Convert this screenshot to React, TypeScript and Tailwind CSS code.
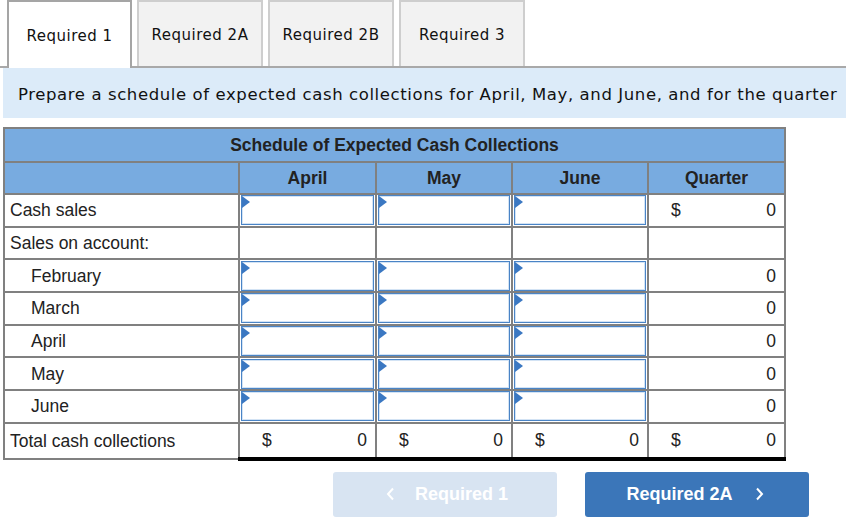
import React from "react";

const Tri = () => (
  <span className="absolute left-0 top-0 w-0 h-0 border-t-[6px] border-b-[6px] border-l-[8px] border-t-transparent border-b-transparent border-l-[#3b78c2]" />
);

const InputCell = () => (
  <td className="border-2 border-[#808080] p-0 h-[32.7px] bg-white">
    <div className="relative h-[30px] mx-[1px] border border-[#4a84c6] shadow-[inset_0_0_0_1px_#d3e3f4] bg-white">
      <Tri />
    </div>
  </td>
);

const Dollar = ({ dollar }: { dollar?: boolean }) => (
  <td className="border-2 border-[#808080] px-[8px] h-[32.7px] bg-white">
    <div className="flex justify-between items-center pl-[14px]">
      <span>{dollar ? "$" : ""}</span>
      <span>0</span>
    </div>
  </td>
);

export default function App() {
  const tabs = ["Required 1", "Required 2A", "Required 2B", "Required 3"];
  const font = { fontFamily: "'DejaVu Sans', Verdana, sans-serif" };
  const rows = ["February", "March", "April", "May", "June"];
  return (
    <div className="w-[846px] h-[530px] bg-white overflow-hidden text-[#222]">
      <div className="flex items-end pt-[2px] pl-[7px] gap-[5px] border-b-2 border-[#a9a9a9] h-[68px]" style={font}>
        {tabs.map((t, i) => (
          <div
            key={t}
            className={
              "flex items-center justify-center pt-[3px] text-[15px] tracking-[0.5px] text-[#111] " +
              (i === 0
                ? "w-[125px] h-[68px] -mb-[2px] bg-white border-2 border-b-0 border-[#a5a5a5]"
                : "w-[126px] h-[66px] bg-[#f2f2f2] border-2 border-b-0 border-[#cecece]")
            }
          >
            {t}
          </div>
        ))}
      </div>
      <div
        className="ml-[3px] h-[50px] bg-[#dcebf9] flex items-center pl-[15px] pt-[5px] text-[16.5px] tracking-[0.6px] text-[#111] whitespace-nowrap"
        style={font}
      >
        Prepare a schedule of expected cash collections for April, May, and June, and for the quarter
      </div>
      <table
        className="ml-[3px] mt-[9px] border-collapse text-[17.5px] text-[#222] table-fixed"
        style={{ fontFamily: "'Liberation Sans', Arial, sans-serif", width: 781 }}
      >
        <colgroup>
          <col style={{ width: 235 }} />
          <col style={{ width: 137 }} />
          <col style={{ width: 136 }} />
          <col style={{ width: 136 }} />
          <col style={{ width: 137 }} />
        </colgroup>
        <tbody>
          <tr className="bg-[#78abe0] h-[34px]">
            <td colSpan={5} className="border-2 border-[#808080] text-center font-bold">
              Schedule of Expected Cash Collections
            </td>
          </tr>
          <tr className="bg-[#78abe0] h-[32px] font-bold">
            <td className="border-2 border-[#808080]"></td>
            <td className="border-2 border-[#808080] text-center">April</td>
            <td className="border-2 border-[#808080] text-center">May</td>
            <td className="border-2 border-[#808080] text-center">June</td>
            <td className="border-2 border-[#808080] text-center">Quarter</td>
          </tr>
          <tr>
            <td className="border-2 border-[#808080] pl-[5px] h-[32.7px]">Cash sales</td>
            <InputCell />
            <InputCell />
            <InputCell />
            <Dollar dollar />
          </tr>
          <tr>
            <td className="border-2 border-[#808080] pl-[5px] h-[32.7px]">Sales on account:</td>
            <td className="border-2 border-[#808080]"></td>
            <td className="border-2 border-[#808080]"></td>
            <td className="border-2 border-[#808080]"></td>
            <td className="border-2 border-[#808080]"></td>
          </tr>
          {rows.map((r) => (
            <tr key={r}>
              <td className="border-2 border-[#808080] pl-[26px] h-[32.7px]">{r}</td>
              <InputCell />
              <InputCell />
              <InputCell />
              <Dollar />
            </tr>
          ))}
          <tr>
            <td className="border-2 border-[#808080] pl-[5px] h-[36px]">Total cash collections</td>
            {[0, 1, 2, 3].map((i) => (
              <td
                key={i}
                className="border-x-2 border-t border-[#808080] border-t-black border-b-[4px] border-b-black px-[8px] h-[36px] bg-white"
              >
                <div className="flex justify-between items-center pl-[14px]">
                  <span>$</span>
                  <span>0</span>
                </div>
              </td>
            ))}
          </tr>
        </tbody>
      </table>
      <div
        className="flex gap-[28px] ml-[333px] mt-[11px] text-[18px] font-bold text-white"
        style={{ fontFamily: "'Liberation Sans', Arial, sans-serif" }}
      >
        <div className="w-[224px] h-[45px] rounded-[3px] bg-[#d8e4f2] flex items-center justify-center gap-[20px] pl-[4px]">
          <svg width="9" height="14" viewBox="0 0 9 14" fill="none">
            <path d="M7 1.5L2 7l5 5.5" stroke="white" strokeWidth="2" />
          </svg>
          <span>Required 1</span>
        </div>
        <div className="w-[224px] h-[45px] rounded-[3px] bg-[#3b76b9] flex items-center justify-center gap-[22px] pr-[4px]">
          <span>Required 2A</span>
          <svg width="9" height="14" viewBox="0 0 9 14" fill="none">
            <path d="M2 1.5L7 7l-5 5.5" stroke="white" strokeWidth="2" />
          </svg>
        </div>
      </div>
    </div>
  );
}
